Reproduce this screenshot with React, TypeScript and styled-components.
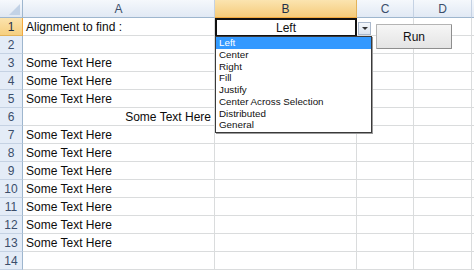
import styled, { createGlobalStyle } from 'styled-components';

const GlobalStyle = createGlobalStyle`
  html, body {
    margin: 0;
    padding: 0;
    background: #ffffff;
  }
  body {
    width: 474px;
    height: 270px;
    overflow: hidden;
    font-family: "Liberation Sans", Arial, sans-serif;
  }
`;

const columns = ['A', 'B', 'C', 'D'];
const alignments = [
  'Left',
  'Center',
  'Right',
  'Fill',
  'Justify',
  'Center Across Selection',
  'Distributed',
  'General',
];

// row number -> [text, right aligned]
const cellA: Record<number, [string, boolean]> = {
  1: ['Alignment to find :', false],
  3: ['Some Text Here', false],
  4: ['Some Text Here', false],
  5: ['Some Text Here', false],
  6: ['Some Text Here', true],
  7: ['Some Text Here', false],
  8: ['Some Text Here', false],
  9: ['Some Text Here', false],
  10: ['Some Text Here', false],
  11: ['Some Text Here', false],
  12: ['Some Text Here', false],
  13: ['Some Text Here', false],
};

const Sheet = styled.div`
  position: relative;
  display: grid;
  grid-template-columns: 23px 192px 142px 57px 58px 10px;
  grid-auto-rows: 18px;
  width: 482px;
`;

const Corner = styled.div`
  position: relative;
  background: linear-gradient(#f6f9fd, #dfe7f2);
  border-right: 1px solid #9eb6ce;
  border-bottom: 1px solid #9eb6ce;
  box-sizing: border-box;

  &::after {
    content: '';
    position: absolute;
    right: 2px;
    bottom: 2px;
    border-left: 11px solid transparent;
    border-bottom: 11px solid #c2d2e6;
  }
`;

const ColHead = styled.div<{ $active?: boolean }>`
  display: flex;
  align-items: center;
  justify-content: center;
  box-sizing: border-box;
  font-size: 12px;
  color: ${(p) => (p.$active ? '#1f2f48' : '#3b4e6b')};
  background: ${(p) =>
    p.$active
      ? 'linear-gradient(#fbe4b0, #f5cb7a)'
      : 'linear-gradient(#f5f8fc, #e1e9f4)'};
  border-right: 1px solid ${(p) => (p.$active ? '#e3b35a' : '#c5d2e3')};
  border-bottom: 1px solid ${(p) => (p.$active ? '#f2a93f' : '#9eb6ce')};
`;

const RowHead = styled.div<{ $active?: boolean }>`
  display: flex;
  align-items: center;
  justify-content: center;
  box-sizing: border-box;
  font-size: 12px;
  color: ${(p) => (p.$active ? '#1f2f48' : '#3b4e6b')};
  background: ${(p) =>
    p.$active ? 'linear-gradient(#fbe3ad, #f6cf80)' : '#e4ecf7'};
  border-right: 1px solid ${(p) => (p.$active ? '#f2a93f' : '#9eb6ce')};
  border-bottom: 1px solid ${(p) => (p.$active ? '#e3b35a' : '#c5d2e3')};
`;

const Cell = styled.div<{ $right?: boolean }>`
  display: flex;
  align-items: center;
  justify-content: ${(p) => (p.$right ? 'flex-end' : 'flex-start')};
  padding: 1px 3px 0 3px;
  box-sizing: border-box;
  font-size: 12px;
  color: #0c0c0c;
  white-space: nowrap;
  border-right: 1px solid #dadcdd;
  border-bottom: 1px solid #dadcdd;
`;

/* form controls floating over cell B1 */
const ComboLayer = styled.div`
  position: absolute;
  left: 215px;
  top: 18px;
  display: flex;
  flex-direction: column;
  align-items: flex-start;
`;

const ComboRow = styled.div`
  display: flex;
  align-items: flex-start;
  gap: 1px;
`;

const Combo = styled.div`
  width: 142px;
  height: 19px;
  box-sizing: border-box;
  border: 2px solid #111;
  background: #fff;
  display: flex;
  align-items: center;
  justify-content: center;
  font-size: 12px;
  color: #111;
  padding-top: 1px;
`;

const DropButton = styled.div`
  margin-top: 4px;
  width: 13px;
  height: 13px;
  box-sizing: border-box;
  border: 1px solid #aab8cc;
  background: linear-gradient(#f4f7fb, #dbe3ee);
  display: flex;
  align-items: center;
  justify-content: center;

  &::after {
    content: '';
    border-left: 3px solid transparent;
    border-right: 3px solid transparent;
    border-top: 3px solid #333;
  }
`;

const List = styled.ul`
  width: 157px;
  margin: -1px 0 0 0;
  padding: 0 0 1px 0;
  list-style: none;
  box-sizing: border-box;
  background: #fff;
  border: 1px solid #3a3a3a;
  box-shadow: 1px 1px 0 #9a9a9a;
`;

const Item = styled.li<{ $selected?: boolean }>`
  height: 11.75px;
  line-height: 11.75px;
  padding-left: 3px;
  font-size: 9.8px;
  color: ${(p) => (p.$selected ? '#fff' : '#111')};
  background: ${(p) => (p.$selected ? '#3399ff' : 'transparent')};
`;

const RunButton = styled.button`
  position: absolute;
  left: 376px;
  top: 24px;
  width: 76px;
  height: 25px;
  box-sizing: border-box;
  border: 1px solid #b4b4b4;
  border-right-color: #8e8e8e;
  border-bottom-color: #8e8e8e;
  border-radius: 1px;
  background: linear-gradient(#f6f6f6, #e4e4e4);
  font-family: "Liberation Sans", Arial, sans-serif;
  font-size: 12px;
  color: #111;
  padding: 0;
`;

function App() {
  const rows = Array.from({ length: 14 }, (_, i) => i + 1);
  return (
    <>
      <GlobalStyle />
      <Sheet>
        <Corner />
        {columns.map((c) => (
          <ColHead key={c} $active={c === 'B'}>
            {c}
          </ColHead>
        ))}
        <ColHead />
        {rows.map((r) => (
          <Row key={r} n={r} />
        ))}

        <ComboLayer>
          <ComboRow>
            <Combo>Left</Combo>
            <DropButton />
          </ComboRow>
          <List>
            {alignments.map((a, i) => (
              <Item key={a} $selected={i === 0}>
                {a}
              </Item>
            ))}
          </List>
        </ComboLayer>
        <RunButton>Run</RunButton>
      </Sheet>
    </>
  );
}

function Row({ n }: { n: number }) {
  const a = cellA[n];
  return (
    <>
      <RowHead $active={n === 1}>{n}</RowHead>
      <Cell $right={a?.[1]}>{a?.[0]}</Cell>
      <Cell />
      <Cell />
      <Cell />
      <Cell />
    </>
  );
}

export default App;
